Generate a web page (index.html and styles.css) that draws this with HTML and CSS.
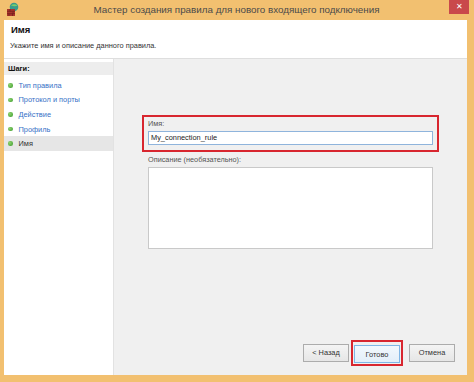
FILE: index.html
```html
<!DOCTYPE html>
<html lang="ru">
<head>
  <meta charset="UTF-8" />
  <title>Мастер создания правила для нового входящего подключения</title>
  <link rel="stylesheet" href="styles.css">
</head>
<body>

  <div class="window">
    <div class="titlebar">
      <div class="app-icon">
        <svg width="13" height="15" viewBox="0 0 13 15">
          <circle cx="8" cy="5" r="4.3" fill="#3a9b8c"/>
          <path d="M5 3.5 Q8 1 11.5 3.5 Q9 5 5 3.5Z" fill="#7ccf6a"/>
          <rect x="1" y="7" width="8" height="7" fill="#a8342c"/>
          <path d="M1 9.3H9M1 11.7H9M4 7V9.3M7 9.3V11.7M3 11.7V14M6.5 11.7V14" stroke="#6e1f1a" stroke-width="0.7"/>
        </svg>
      </div>
      <div class="title">Мастер создания правила для нового входящего подключения</div>
      <div class="close">&#x2715;</div>
    </div>

    <div class="header">
      <h1>Имя</h1>
      <p>Укажите имя и описание данного правила.</p>
    </div>

    <div class="main">
      <div class="steps">
        <div class="steps-title">Шаги:</div>
        <div class="step"><span class="dot"></span>Тип правила</div>
        <div class="step"><span class="dot"></span>Протокол и порты</div>
        <div class="step"><span class="dot"></span>Действие</div>
        <div class="step"><span class="dot"></span>Профиль</div>
        <div class="step current"><span class="dot"></span>Имя</div>
      </div>

      <div class="panel">
        <div class="form">
          <div class="highlight">
            <label>Имя:</label>
            <div class="input">My_connection_rule</div>
          </div>
          <div class="desc">
            <label>Описание (необязательно):</label>
            <div class="textarea"></div>
          </div>
        </div>

        <div class="buttons">
          <button>&lt; Назад</button>
          <div class="highlight-btn"><button class="default">Готово</button></div>
          <button>Отмена</button>
        </div>
      </div>
    </div>
  </div>

</body>
</html>
```

FILE: styles.css
```css
* { box-sizing: border-box; }
body {
  margin: 0;
  font-family: "Liberation Sans", Arial, sans-serif;
  background: #f2c070;
}
.window {
  width: 474px;
  height: 382px;
  background: #f2c070;
  padding: 0 7px 7px 4px;
  display: flex;
  flex-direction: column;
}
.titlebar {
  height: 20px;
  display: grid;
  grid-template-columns: 1fr auto 1fr;
  align-items: start;
  margin-right: -2px;
}
.app-icon { padding: 2px 0 0 2px; }
.title {
  font-size: 9.8px;
  color: #4a4a4a;
  padding-top: 4px;
}
.close {
  justify-self: end;
  width: 20px;
  height: 14px;
  background: #c9494b;
  color: #fff;
  font-size: 8px;
  text-align: center;
  line-height: 14px;
}
.header {
  background: #fff;
  height: 39px;
  border-bottom: 1px solid #dedede;
  padding: 4px 6px 0 6px;
}
.header h1 {
  margin: 0;
  font-size: 9.5px;
  font-weight: bold;
  color: #111;
  line-height: 12px;
  padding-left: 1px;
}
.header p {
  margin: 5px 0 0 0;
  font-size: 7.4px;
  color: #333;
}
.main {
  flex: 1;
  display: flex;
}
.steps {
  width: 110px;
  background: #fff;
  border-right: 1px solid #e2e2e2;
  padding-top: 3px;
}
.steps-title {
  height: 13px;
  background: #ededed;
  font-size: 7.4px;
  font-weight: bold;
  color: #111;
  line-height: 13px;
  padding-left: 4px;
  margin-bottom: 3px;
}
.step {
  height: 14.6px;
  display: flex;
  align-items: center;
  font-size: 7.4px;
  color: #3670c6;
  padding-left: 4px;
}
.step.current {
  background: #e6e6e6;
  color: #333;
}
.dot {
  width: 4.5px;
  height: 4.5px;
  border-radius: 50%;
  background: radial-gradient(circle at 35% 35%, #8fd36f, #3a9a2c);
  margin-right: 6px;
}
.panel {
  flex: 1;
  background: #f0f0f0;
  display: flex;
  flex-direction: column;
  justify-content: space-between;
  padding: 56px 12px 9px 28px;
}
.form { margin-right: 16px; }
.highlight {
  border: 2px solid #d8262f;
  padding: 2px 4px 5px 4px;
}
label {
  display: block;
  font-size: 7.3px;
  color: #555;
  margin-bottom: 3px;
}
.input {
  height: 14px;
  background: #fff;
  border: 1px solid #8fb4dc;
  font-size: 7.4px;
  color: #222;
  line-height: 12px;
  padding-left: 2px;
}
.desc {
  margin: 3px 6px 0 6px;
}
.textarea {
  height: 82px;
  background: #fff;
  border: 1px solid #c9c9c9;
}
.buttons {
  display: flex;
  justify-content: flex-end;
  align-items: center;
}
button {
  width: 46px;
  height: 18px;
  font-family: inherit;
  font-size: 7.4px;
  color: #333;
  background: linear-gradient(#f4f4f4, #e6e6e6);
  border: 1px solid #acacac;
  padding: 0;
}
.highlight-btn {
  border: 2px solid #d8262f;
  padding: 1px;
  margin: 0 6px 0 2px;
}
button.default {
  border-color: #7fb6e6;
  background: linear-gradient(#f2f8fd, #e3eef9);
}
```
